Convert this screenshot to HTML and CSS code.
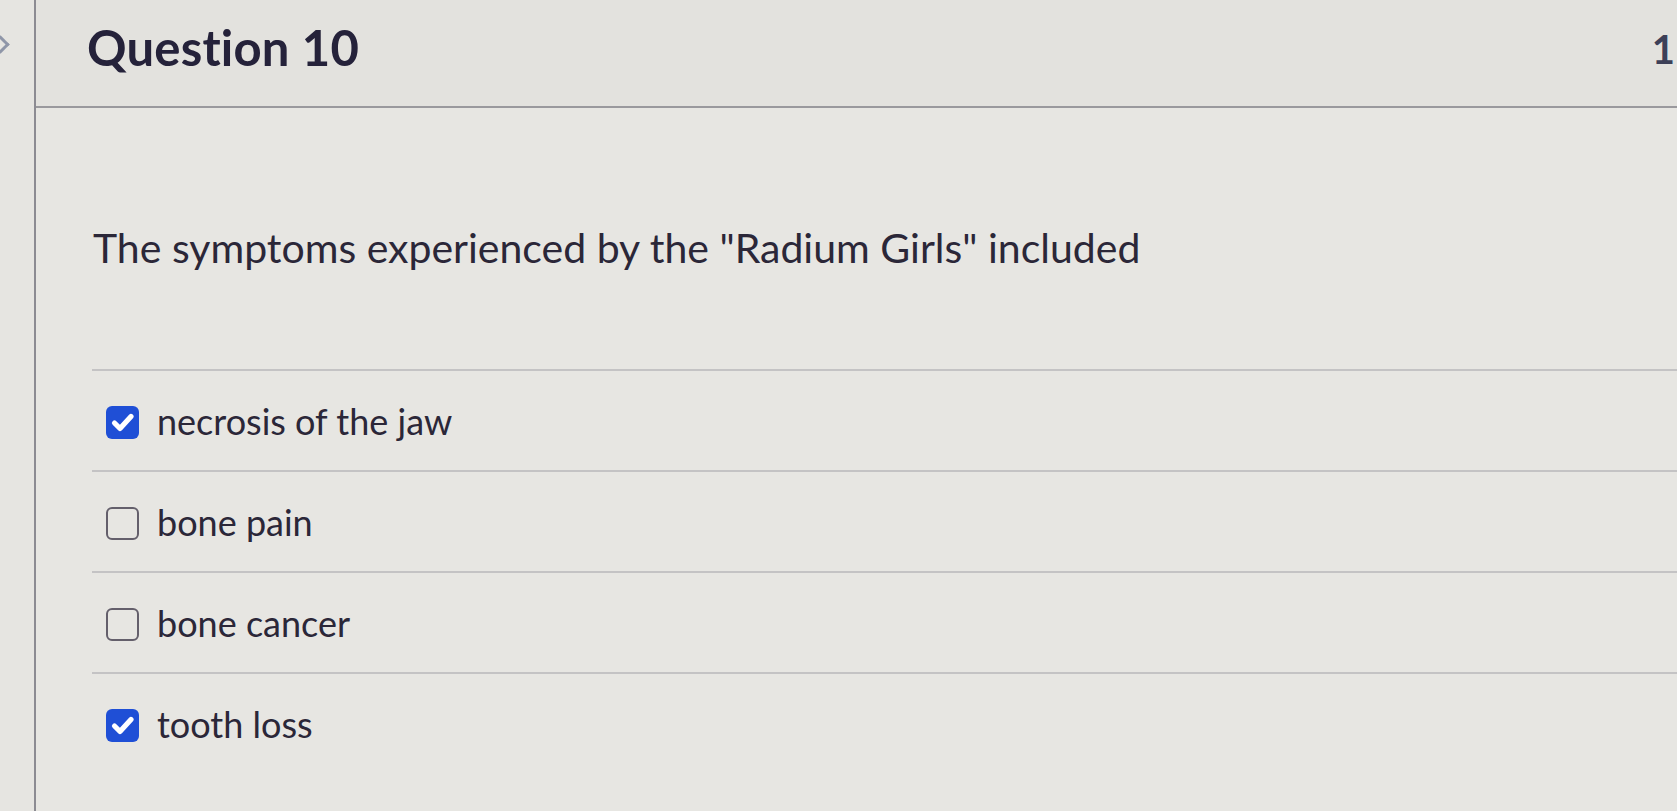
FILE: index.html
```html
<!DOCTYPE html>
<html lang="en">
<head>
<meta charset="utf-8">
<title>Question 10</title>
<link rel="stylesheet" href="styles.css">
</head>
<body>
<div class="page">
  <aside class="gutter">
    <span class="gutter-arrow"></span>
  </aside>
  <main class="question">
    <header class="q-header">
      <h2 class="q-title">Question 10</h2>
      <span class="q-points">1</span>
    </header>
    <section class="q-body">
      <p class="q-text">The symptoms experienced by the "Radium Girls" included</p>
      <ul class="answers">
        <li class="answer">
          <span class="box checked">
            <svg viewBox="0 0 33 33" width="33" height="33"><path d="M8.5 17 L14 22.5 L25 10.5" fill="none" stroke="#fff" stroke-width="5.2" stroke-linecap="round" stroke-linejoin="round"/></svg>
          </span>
          <span class="label">necrosis of the jaw</span>
        </li>
        <li class="answer">
          <span class="box"></span>
          <span class="label">bone pain</span>
        </li>
        <li class="answer">
          <span class="box"></span>
          <span class="label">bone cancer</span>
        </li>
        <li class="answer">
          <span class="box checked">
            <svg viewBox="0 0 33 33" width="33" height="33"><path d="M8.5 17 L14 22.5 L25 10.5" fill="none" stroke="#fff" stroke-width="5.2" stroke-linecap="round" stroke-linejoin="round"/></svg>
          </span>
          <span class="label">tooth loss</span>
        </li>
      </ul>
    </section>
  </main>
</div>
</body>
</html>
```

FILE: styles.css
```css
html, body {
  margin: 0;
  padding: 0;
  height: 811px;
  overflow: hidden;
  background: #e7e6e2;
  font-family: Lato, "Open Sans", sans-serif;
  color: #2b2838;
}

.page {
  display: flex;
  height: 811px;
}

.gutter {
  width: 34px;
  flex: none;
  border-right: 2px solid #8c8b92;
  background: #e6e5e1;
  position: relative;
}

.gutter-arrow {
  position: absolute;
  left: -6px;
  top: 38px;
  width: 10px;
  height: 10px;
  border-top: 3px solid #8f96a8;
  border-right: 3px solid #8f96a8;
  transform: rotate(45deg);
}

.question {
  flex: 1;
  min-width: 0;
  display: flex;
  flex-direction: column;
}

.q-header {
  height: 106px;
  border-bottom: 2px solid #9a999d;
  background: #e3e2de;
  display: flex;
  justify-content: space-between;
  align-items: flex-start;
  padding-left: 51px;
  overflow: hidden;
}

.q-title {
  margin: 17px 0 0;
  font-size: 49px;
  font-weight: 700;
  line-height: 60px;
  color: #25223a;
  letter-spacing: 0.2px;
}

.q-points {
  margin: 24px 2px 0 0;
  font-size: 40px;
  font-weight: 700;
  line-height: 50px;
  color: #3d4058;
}

.q-body {
  flex: 1;
  padding-left: 56px;
}

.q-text {
  margin: 115px 0 0 1px;
  font-size: 41px;
  line-height: 50px;
  font-weight: 400;
  color: #2b2738;
}

.answers {
  list-style: none;
  margin: 96px 0 0;
  padding: 0;
  border-top: 2px solid #c4c3c4;
}

.answer {
  height: 99px;
  border-bottom: 2px solid #c4c3c4;
  display: flex;
  align-items: center;
  padding-left: 14px;
  gap: 18px;
}

.answer:last-child {
  border-bottom: none;
}

.box {
  width: 33px;
  height: 33px;
  box-sizing: border-box;
  border: 2.5px solid #645f6b;
  border-radius: 6px;
  flex: none;
  display: flex;
  align-items: center;
  justify-content: center;
  margin-top: 4px;
}

.box.checked {
  border: none;
  background: #1f4fd6;
}

.label {
  font-size: 36px;
  line-height: 44px;
  color: #2b2738;
}
```
